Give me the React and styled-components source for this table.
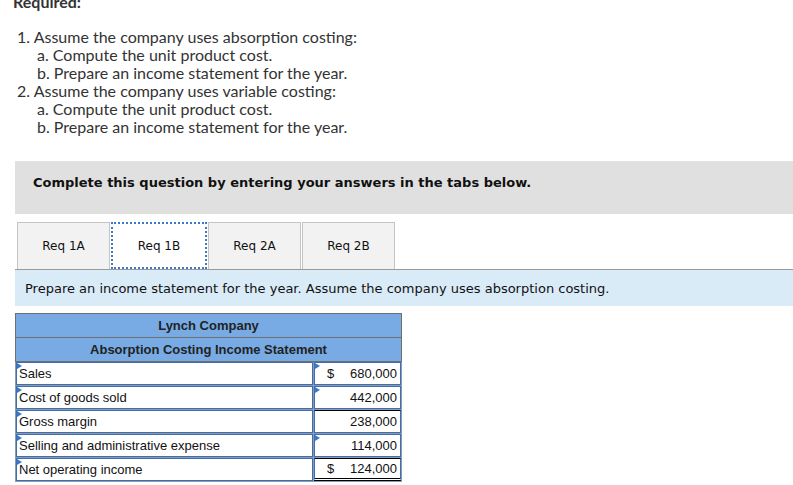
import styled, { createGlobalStyle } from "styled-components";

const GlobalStyle = createGlobalStyle`
  html, body {
    margin: 0;
    padding: 0;
    background: #ffffff;
  }
`;

const steps = [
  { num: "1.", text: "Assume the company uses absorption costing:" },
  { sub: true, text: "a. Compute the unit product cost." },
  { sub: true, text: "b. Prepare an income statement for the year." },
  { num: "2.", text: "Assume the company uses variable costing:" },
  { sub: true, text: "a. Compute the unit product cost." },
  { sub: true, text: "b. Prepare an income statement for the year." },
];

const tabs = [
  { label: "Req 1A", width: 93 },
  { label: "Req 1B", width: 96, active: true },
  { label: "Req 2A", width: 93 },
  { label: "Req 2B", width: 93 },
];

const rows = [
  { label: "Sales", dollar: true, value: "680,000", input: true },
  { label: "Cost of goods sold", value: "442,000", input: true },
  { label: "Gross margin", value: "238,000", line: "single" },
  { label: "Selling and administrative expense", value: "114,000", input: true },
  { label: "Net operating income", dollar: true, value: "124,000", line: "double" },
];

export default function App() {
  return (
    <Page>
      <GlobalStyle />
      <Required>Required:</Required>
      <StepList>
        {steps.map((s, i) => (
          <Step key={i} sub={s.sub}>
            {s.num ? `${s.num} ` : ""}
            {s.text}
          </Step>
        ))}
      </StepList>

      <Notice>Complete this question by entering your answers in the tabs below.</Notice>

      <TabRow>
        {tabs.map((t) => (
          <Tab key={t.label} $active={t.active} style={{ width: t.width }}>
            {t.label}
          </Tab>
        ))}
      </TabRow>

      <Instruction>
        Prepare an income statement for the year. Assume the company uses absorption costing.
      </Instruction>

      <Statement>
        <tbody>
          <tr>
            <HeadCell colSpan={2}>Lynch Company</HeadCell>
          </tr>
          <tr>
            <HeadCell colSpan={2}>Absorption Costing Income Statement</HeadCell>
          </tr>
          {rows.map((r) => (
            <tr key={r.label}>
              <LabelCell>
                <Field>
                  <Marker />
                  {r.label}
                </Field>
              </LabelCell>
              <ValueCell>
                <Field $line={r.line} $value>
                  {r.input && <Marker />}
                  <Dollar>{r.dollar ? "$" : ""}</Dollar>
                  <Amount>{r.value}</Amount>
                </Field>
              </ValueCell>
            </tr>
          ))}
        </tbody>
      </Statement>
    </Page>
  );
}

const Page = styled.div`
  width: 793px;
  height: 485px;
  overflow: hidden;
  font-family: Lato, "Open Sans", sans-serif;
  color: #333333;
`;

const Required = styled.div`
  margin: -7px 0 0 13px;
  font-size: 16px;
  line-height: 18px;
  font-weight: 700;
`;

const StepList = styled.div`
  margin-top: 17px;
  display: flex;
  flex-direction: column;
`;

const Step = styled.div`
  padding-left: ${({ sub }) => (sub ? "37px" : "17px")};
  font-size: 16px;
  line-height: 18px;
`;

const Notice = styled.div`
  box-sizing: border-box;
  margin: 25px 0 0 15px;
  height: 53px;
  padding: 14px 0 0 18px;
  background: #e0e0e0;
  font-family: Verdana, "DejaVu Sans", sans-serif;
  font-size: 13px;
  line-height: 16px;
  font-weight: 700;
  color: #111111;
`;

const TabRow = styled.div`
  margin: 8px 0 0 15px;
  padding-left: 2px;
  display: flex;
  gap: 1px;
  border-bottom: 1px solid #9a9a9a;
`;

const Tab = styled.div`
  box-sizing: border-box;
  height: 47px;
  display: flex;
  align-items: center;
  justify-content: center;
  font-family: Verdana, "DejaVu Sans", sans-serif;
  font-size: 12px;
  color: #111111;
  background: ${({ $active }) => ($active ? "#ffffff" : "#f2f2f2")};
  border: ${({ $active }) =>
    $active ? "2px dotted #3d78c2" : "1px solid #c4c4c4"};
  border-bottom: ${({ $active }) => ($active ? "2px dotted #3d78c2" : "none")};
  margin-bottom: ${({ $active }) => ($active ? "-2px" : "0")};
`;

const Instruction = styled.div`
  margin-left: 15px;
  height: 36px;
  padding-left: 10px;
  display: flex;
  align-items: center;
  background: #daebf8;
  font-family: Verdana, "DejaVu Sans", sans-serif;
  font-size: 13px;
  color: #111111;
`;

const Statement = styled.table`
  margin: 7px 0 0 15px;
  width: 387px;
  border-collapse: collapse;
  border: 1px solid #6f6f6f;
  font-family: Arial, "Liberation Sans", sans-serif;
  font-size: 13px;
  color: #111111;
`;

const HeadCell = styled.td`
  height: 23px;
  padding: 0;
  background: #78abe4;
  border: 1px solid #6f6f6f;
  text-align: center;
  font-weight: 700;
  font-size: 13px;
  color: #222222;
`;

const LabelCell = styled.td`
  padding: 0;
  border: 1px solid #8c9bb0;
  background: #ffffff;
`;

const ValueCell = styled(LabelCell)`
  width: 87px;
`;

const Field = styled.div`
  position: relative;
  box-sizing: border-box;
  height: 23px;
  display: flex;
  align-items: center;
  padding: 0 3px 0 2px;
  border: 1px solid #3e6db0;
  border-top-color: ${({ $line }) => ($line ? "#000000" : "#3e6db0")};
  border-bottom: ${({ $line }) =>
    $line === "double" ? "3px double #000000" : "1px solid #3e6db0"};
`;

const Marker = styled.span`
  position: absolute;
  top: 0;
  left: 0;
  width: 0;
  height: 0;
  border-top: 3px solid transparent;
  border-bottom: 3px solid transparent;
  border-left: 5px solid #3d78c6;
`;

const Dollar = styled.span`
  width: 20px;
  padding-left: 10px;
`;

const Amount = styled.span`
  margin-left: auto;
`;
